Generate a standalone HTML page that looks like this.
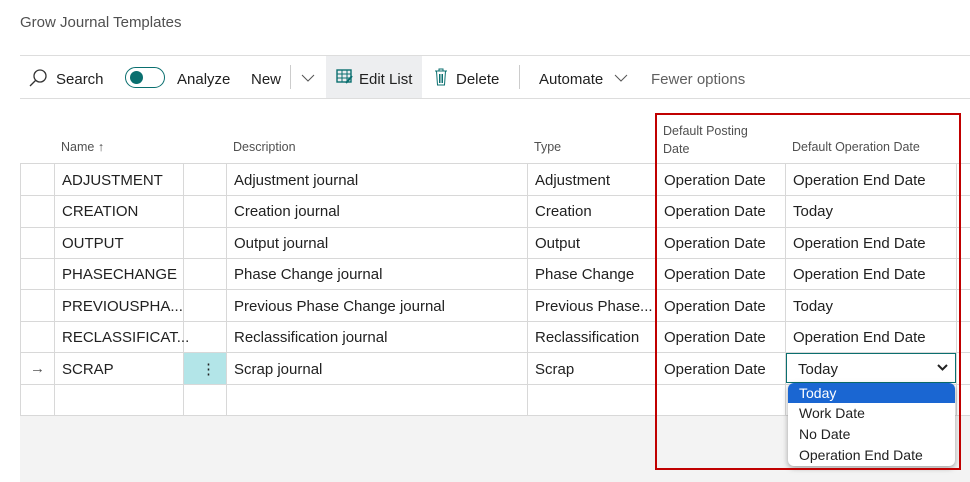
<!DOCTYPE html><html><head><style>
body{margin:0;width:970px;height:482px;background:#fff;font-family:"Liberation Sans",sans-serif;color:#212121;position:relative;overflow:hidden}
.a{position:absolute;white-space:nowrap}
.t{font-size:15px}
.r{margin-top:1px}
.h{font-size:12.5px;color:#505050}
.hl{position:absolute;left:20px;width:950px;height:1px;background:#d8d8d8}
.vl{position:absolute;width:1px;background:#d8d8d8;top:163px;height:252px}
</style></head><body>
<div class="a" style="left:20px;top:14px;font-size:15px;color:#505050">Grow Journal Templates</div>
<div class="hl" style="top:55px;background:#ddd"></div>
<div class="hl" style="top:98px;background:#ddd"></div>
<div class="a" style="left:326px;top:56px;width:96px;height:42px;background:#edeef0"></div>
<svg class="a" style="left:28px;top:68px" width="20" height="20"><circle cx="12" cy="8" r="6" fill="none" stroke="#333" stroke-width="1.3"/><line x1="8" y1="12" x2="2" y2="18" stroke="#333" stroke-width="1.3"/></svg>
<div class="a t" style="left:56px;top:71px">Search</div>
<div class="a" style="left:125px;top:67px;width:38px;height:19px;border:1.5px solid #0a6f6f;border-radius:11px"></div>
<div class="a" style="left:130px;top:71px;width:13px;height:13px;border-radius:50%;background:#0a6f6f"></div>
<div class="a t" style="left:177px;top:71px">Analyze</div>
<div class="a t" style="left:251px;top:71px">New</div>
<div class="a" style="left:290px;top:65px;width:1px;height:24px;background:#ccc"></div>
<svg class="a" style="left:301px;top:74px" width="14" height="8"><path d="M1 1l6 6 6-6" fill="none" stroke="#555"/></svg>
<svg class="a" style="left:336px;top:69px" width="18" height="16"><rect x="1" y="1" width="14" height="12" fill="none" stroke="#0a6f6f" stroke-width="1.4"/><path d="M1 5h14M1 9h14M6 1v12M11 1v12" stroke="#0a6f6f"/><path d="M10 14l6-7" stroke="#0a6f6f" stroke-width="2"/></svg>
<div class="a t" style="left:359px;top:71px">Edit List</div>
<svg class="a" style="left:434px;top:68px" width="14" height="18"><path d="M1 3h12M5 3V1h4v2M2.5 3l1 14h7l1-14M5.5 6v9M7 6v9M8.5 6v9" fill="none" stroke="#0a6f6f"/></svg>
<div class="a t" style="left:456px;top:71px">Delete</div>
<div class="a" style="left:519px;top:65px;width:1px;height:24px;background:#ccc"></div>
<div class="a t" style="left:539px;top:71px">Automate</div>
<svg class="a" style="left:614px;top:74px" width="14" height="8"><path d="M1 1l6 6 6-6" fill="none" stroke="#555"/></svg>
<div class="a t" style="left:651px;top:71px;color:#606060">Fewer options</div>

<div class="a h" style="left:61px;top:140px">Name ↑</div>
<div class="a h" style="left:233px;top:140px">Description</div>
<div class="a h" style="left:534px;top:140px">Type</div>
<div class="a h" style="left:663px;top:122px;line-height:18px">Default Posting<br>Date</div>
<div class="a h" style="left:792px;top:140px">Default Operation Date</div>

<div class="hl" style="top:163px"></div><div class="hl" style="top:195px"></div><div class="hl" style="top:227px"></div><div class="hl" style="top:258px"></div><div class="hl" style="top:289px"></div><div class="hl" style="top:321px"></div><div class="hl" style="top:352px"></div><div class="hl" style="top:384px"></div><div class="hl" style="top:415px"></div>
<div class="a" style="left:20px;top:416px;width:950px;height:66px;background:#f3f3f3"></div>
<div class="vl" style="left:20px"></div><div class="vl" style="left:54px"></div><div class="vl" style="left:183px"></div><div class="vl" style="left:226px"></div><div class="vl" style="left:527px"></div><div class="vl" style="left:656px"></div><div class="vl" style="left:785px"></div><div class="vl" style="left:956px"></div>
<div class="a" style="left:184px;top:353px;width:42px;height:31px;background:#b3e5e8"></div>
<div class="a t" style="left:201px;top:360px">⋮</div>
<div class="a t" style="left:30px;top:360px;color:#555">→</div>

<div class="a t" style="left:62px;top:172px">ADJUSTMENT</div>
<div class="a t" style="left:62px;top:203px">CREATION</div>
<div class="a t" style="left:62px;top:235px">OUTPUT</div>
<div class="a t" style="left:62px;top:266px">PHASECHANGE</div>
<div class="a t" style="left:62px;top:298px">PREVIOUSPHA...</div>
<div class="a t" style="left:62px;top:329px">RECLASSIFICAT...</div>
<div class="a t" style="left:62px;top:361px">SCRAP</div>
<div class="a t" style="left:234px;top:172px">Adjustment journal</div>
<div class="a t" style="left:234px;top:203px">Creation journal</div>
<div class="a t" style="left:234px;top:235px">Output journal</div>
<div class="a t" style="left:234px;top:266px">Phase Change journal</div>
<div class="a t" style="left:234px;top:298px">Previous Phase Change journal</div>
<div class="a t" style="left:234px;top:329px">Reclassification journal</div>
<div class="a t" style="left:234px;top:361px">Scrap journal</div>
<div class="a t" style="left:535px;top:172px">Adjustment</div>
<div class="a t" style="left:535px;top:203px">Creation</div>
<div class="a t" style="left:535px;top:235px">Output</div>
<div class="a t" style="left:535px;top:266px">Phase Change</div>
<div class="a t" style="left:535px;top:298px">Previous Phase...</div>
<div class="a t" style="left:535px;top:329px">Reclassification</div>
<div class="a t" style="left:535px;top:361px">Scrap</div>
<div class="a t" style="left:664px;top:172px">Operation Date</div>
<div class="a t" style="left:664px;top:203px">Operation Date</div>
<div class="a t" style="left:664px;top:235px">Operation Date</div>
<div class="a t" style="left:664px;top:266px">Operation Date</div>
<div class="a t" style="left:664px;top:298px">Operation Date</div>
<div class="a t" style="left:664px;top:329px">Operation Date</div>
<div class="a t" style="left:664px;top:361px">Operation Date</div>
<div class="a t" style="left:793px;top:172px">Operation End Date</div>
<div class="a t" style="left:793px;top:203px">Today</div>
<div class="a t" style="left:793px;top:235px">Operation End Date</div>
<div class="a t" style="left:793px;top:266px">Operation End Date</div>
<div class="a t" style="left:793px;top:298px">Today</div>
<div class="a t" style="left:793px;top:329px">Operation End Date</div>
<div class="a" style="left:786px;top:353px;width:168px;height:28px;border:1px solid #0a6f6f;background:#fff"></div>
<div class="a t" style="left:798px;top:361px">Today</div>
<svg class="a" style="left:937px;top:364px" width="11" height="8"><path d="M1 1l4.5 4.5L10 1" fill="none" stroke="#222" stroke-width="2"/></svg>
<div class="a" style="left:788px;top:383px;width:167px;height:83px;background:#fff;border-radius:6px;box-shadow:0 2px 6px rgba(0,0,0,.35);overflow:hidden;font-size:14px">
<div style="background:#1a66d2;color:#fff;height:20px;line-height:21px;padding-left:11px">Today</div>
<div style="height:21px;line-height:21px;padding-left:11px">Work Date</div>
<div style="height:21px;line-height:21px;padding-left:11px">No Date</div>
<div style="height:21px;line-height:21px;padding-left:11px">Operation End Date</div></div>
<div class="a" style="left:655px;top:113px;width:302px;height:353px;border:2px solid #c00000"></div>
</body></html>
